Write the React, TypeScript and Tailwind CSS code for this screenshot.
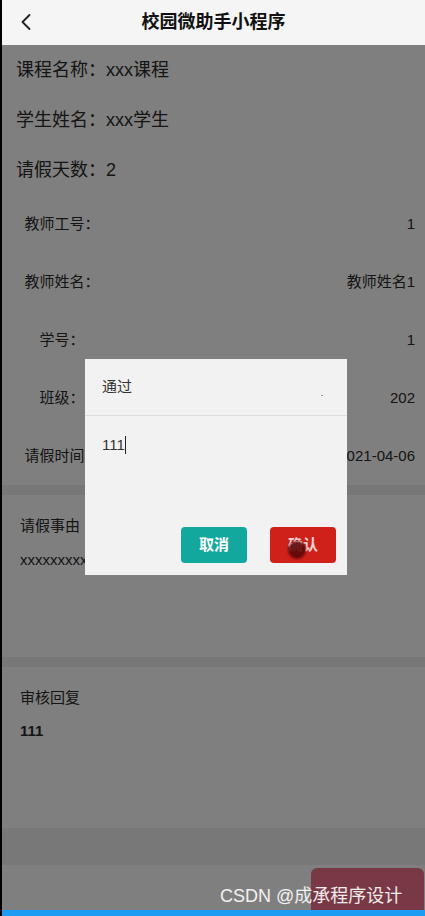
import { ChevronLeft } from "lucide-react";

const font = {
  fontFamily: '"Liberation Sans", "Noto Sans CJK SC", sans-serif',
};

const teacherRows = [
  { label: "教师工号：", value: "1" },
  { label: "教师姓名：", value: "教师姓名1" },
  { label: "学号：", value: "1" },
  { label: "班级：", value: "202" },
  { label: "请假时间：", value: "2021-04-06" },
];

export default function App() {
  return (
    <div
      className="relative w-[425px] h-[916px] overflow-hidden bg-white border-l-2 border-black flex flex-col text-[#2a2a2a]"
      style={font}
    >
      {/* nav bar */}
      <div className="relative h-[45px] shrink-0 bg-[#f5f5f5] flex items-center justify-center">
        <ChevronLeft
          className="absolute left-[10px] top-[8px] text-[#222]"
          size={28}
          strokeWidth={1.6}
        />
        <div className="text-[18px] font-bold text-[#111]">校园微助手小程序</div>
      </div>

      {/* leave summary */}
      <div className="flex flex-col">
        <div className="h-[50px] flex items-center pl-[14px] text-[18px]">课程名称：xxx课程</div>
        <div className="h-[50px] flex items-center pl-[14px] text-[18px]">学生姓名：xxx学生</div>
        <div className="h-[50px] flex items-center pl-[14px] text-[18px]">请假天数：2</div>
      </div>

      <div className="flex flex-col">
        {teacherRows.map((row) => (
          <div
            key={row.label}
            className="h-[58px] flex items-center justify-between pl-[20px] pr-[10px] text-[15px]"
          >
            <span className="w-[80px] text-center">{row.label}</span>
            <span>{row.value}</span>
          </div>
        ))}
      </div>

      <div className="h-[10px] bg-[#eeeeee]" />

      <div className="h-[162px] flex flex-col gap-[11px] pt-[20px] pl-[18px] text-[15px]">
        <div>请假事由</div>
        <div>xxxxxxxxxxxxxxxxxxxxxxxx</div>
      </div>

      <div className="h-[10px] bg-[#eeeeee]" />

      <div className="h-[161px] flex flex-col gap-[10px] pt-[20px] pl-[18px] text-[15px]">
        <div>审核回复</div>
        <div className="font-bold">111</div>
      </div>

      <div className="h-[37px] bg-[#f0f0f0]" />

      <div className="h-[45px] flex justify-end items-end pr-[1px]">
        <div className="w-[113px] h-[42px] rounded-t-[6px] bg-[#f2708a]" />
      </div>

      <div className="h-[6px] bg-[#1c9cf2]" />

      {/* mask */}
      <div className="absolute left-0 right-0 top-[45px] bottom-[6px] bg-black/50" />

      {/* review dialog */}
      <div className="absolute left-[83px] top-[359px] w-[262px] h-[216px] bg-[#f2f2f2] flex flex-col">
        <div className="h-[57px] flex items-center justify-between pl-[17px] pr-[24px] border-b border-[#dddddd] text-[15px] text-[#333]">
          <span>通过</span>
          <span className="w-[2px] h-[1px] bg-[#999] mt-[16px]" />
        </div>
        <div className="flex-1 pt-[18px] pl-[17px] text-[15px] text-[#333] flex items-start">
          <span className="leading-[22px]">111</span>
          <span className="w-[1px] h-[18px] bg-[#222] mt-[2px]" />
        </div>
        <div className="flex justify-end gap-[23px] pr-[11px] pb-[12px]">
          <button className="w-[66px] h-[36px] rounded-[4px] bg-[#13a89e] text-white text-[15px] font-bold">
            取消
          </button>
          <button className="relative w-[66px] h-[36px] rounded-[4px] bg-[#d0201a] text-white/80 text-[15px] font-bold">
            确认
            <span className="absolute left-[18px] top-[14px] w-[18px] h-[18px] rounded-full bg-[#5c0808]/90 blur-[1px]" />
          </button>
        </div>
      </div>

      <div className="absolute left-[218px] top-[883px] text-[18px] text-white/90">
        CSDN @成承程序设计
      </div>
    </div>
  );
}
